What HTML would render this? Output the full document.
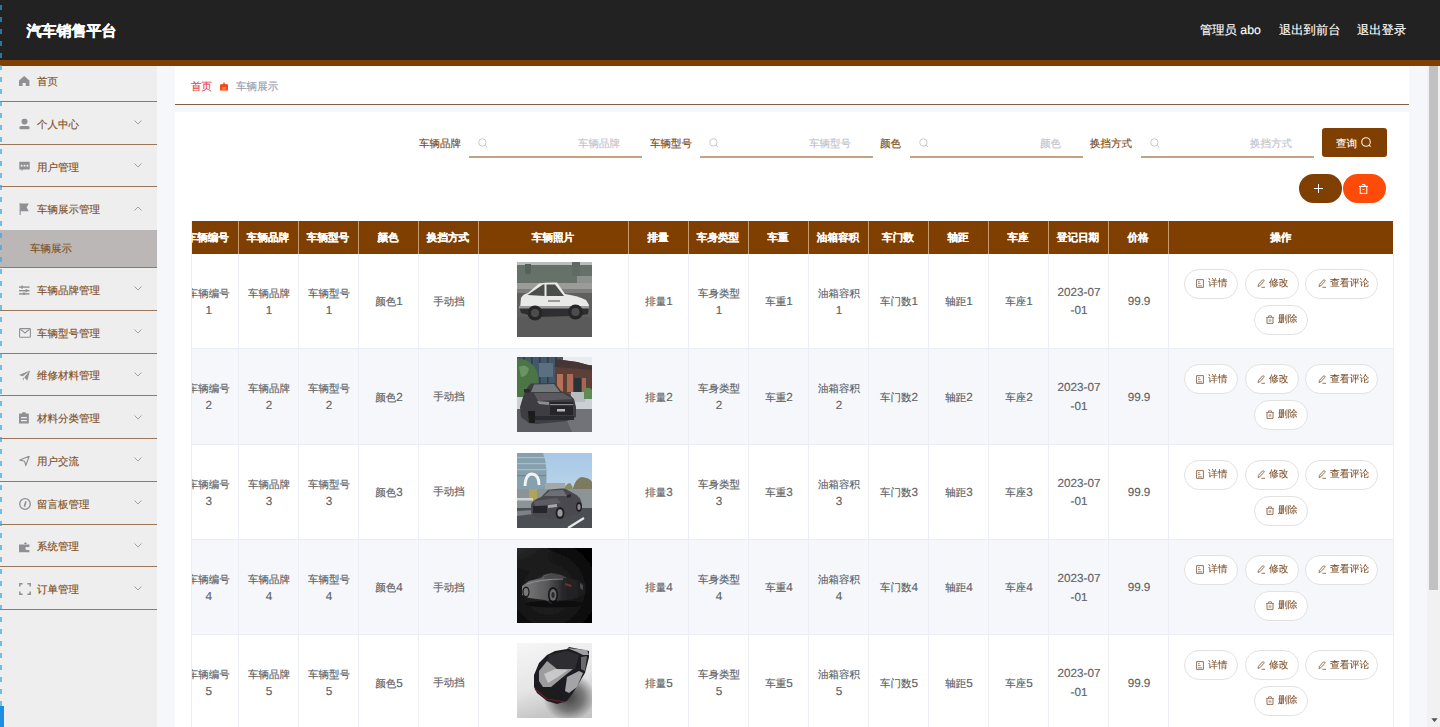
<!DOCTYPE html>
<html><head><meta charset="utf-8">
<style>
*{box-sizing:border-box;margin:0;padding:0}
html,body{width:1440px;height:727px;overflow:hidden;background:#f5f7fa;font-family:"Liberation Sans",sans-serif;text-rendering:geometricPrecision;-webkit-text-stroke-width:0.15px}
#hdr{position:absolute;left:0;top:0;width:1440px;height:60px;background:#222222}
#title{position:absolute;left:26.5px;top:22px;font-size:15px;font-weight:bold;-webkit-text-stroke:0.3px #fff;color:#fff;line-height:20px;white-space:nowrap}
.hn{position:absolute;top:21px;font-size:12.3px;color:#fff;line-height:18px;white-space:nowrap}
#bar{position:absolute;left:0;top:60px;width:1440px;height:6px;background:#7f3f00}
#side{position:absolute;left:0;top:66px;width:157px;height:661px;background:#eeeeee}
.si{position:absolute;left:0;width:157px;top:0}
.si .ic{position:absolute;left:19px;top:50%;transform:translateY(-50%);display:flex;line-height:0}
.si .st{position:absolute;left:37px;top:50%;margin-top:-6px;font-size:10.5px;line-height:17px;color:#7e5028;white-space:nowrap}
.si .chv{position:absolute;left:134px;top:50%;margin-top:-2.6px;line-height:0}
.sub{position:absolute;left:0;width:157px;background:#bcb7b7}
.sbl{position:absolute;left:0;width:157px;height:1px;background:#9a7758}
.subt{position:absolute;left:30px;top:11.5px;font-size:10.5px;line-height:17px;color:#7e5028}
#crumb{position:absolute;left:175px;top:66px;width:1234px;height:39px;background:#fff;border-bottom:1px solid #7d6048}
#crumb .c1{position:absolute;left:16px;top:13px;font-size:10.6px;line-height:17px;color:#e8454f}
#crumb .c2{position:absolute;left:61px;top:13px;font-size:10.6px;line-height:17px;color:#97a0b0}
#crumb svg{position:absolute;left:44.8px;top:15.5px}
#main{position:absolute;left:175px;top:112px;width:1234px;height:615px;background:#fff}
.lbl{position:absolute;top:136px;font-size:10.5px;line-height:17px;color:#7a4a20;white-space:nowrap}
.inp{position:absolute;top:127px;height:31px;border-bottom:2px solid #c5a282}
.inp .sic{position:absolute;left:9px;top:11px}
.inp .ph{position:absolute;right:22px;top:9px;font-size:10.5px;line-height:17px;color:#c0c4cc;white-space:nowrap}
#qbtn{position:absolute;left:1322px;top:127.6px;width:64.8px;height:29.6px;background:#7f3f00;border-radius:3px;color:#fff;font-size:10.5px;line-height:17px}
#qbtn span{position:absolute;left:14px;top:8.4px}
#qbtn svg{position:absolute;left:39px;top:9.4px}
.pill{position:absolute;top:174px;width:43px;height:29px;border-radius:15px}
#tw{position:absolute;left:191px;top:221px;width:1203px;height:506px;overflow:hidden;border-left:1px solid #ebeef5}
table{position:absolute;left:-14px;top:0;border-collapse:collapse;table-layout:fixed;width:1215px}
th{height:32.5px;padding-top:3px !important;-webkit-text-stroke:0.15px #fff;background:#7f3f00;color:#fff;font-size:10.6px;font-weight:bold;text-align:center;border-left:1px solid #c89a70;padding:0;white-space:nowrap;overflow:hidden}
th:first-child{border-left:none}
td .n{font-size:11.7px}
td .c{position:relative;top:1.5px}
td{height:95.3px;padding-top:3px !important;padding-left:2px !important;border-left:1px solid #ebeef5;border-bottom:1px solid #ebeef5;text-align:center;font-size:10.5px;line-height:17.5px;color:#606266;padding:0;overflow:hidden}
td:first-child{border-left:none}
td .img{width:75px;height:75px;margin:0 auto;line-height:0;position:relative;top:-1.5px;left:1.5px}
td.ops{position:relative;border-right:1px solid #ebeef5}
td.imc{padding-top:0 !important;padding-left:0 !important}
td.ops{padding-left:0 !important}
.opw{position:absolute;left:0;top:0;width:225px;height:95px}
.ob{position:absolute;height:30px;border:1px solid #e2e2e2;border-radius:15px;background:#fff;color:#7a4c26}
.ob svg{position:absolute;left:11.7px;top:9.2px}
.ob b{position:absolute;left:23.3px;top:8.2px;font-weight:normal;font-size:19.6px;line-height:20px;transform:scale(0.5);transform-origin:0 0;white-space:nowrap}
#sb{position:absolute;left:1427px;top:66px;width:13px;height:661px;background:#f1f1f1}
#thumb{position:absolute;left:1429px;top:66px;width:9px;height:524px;background:#c1c1c1}
#dash{position:absolute;left:0;top:0;width:2px;height:706px;background:repeating-linear-gradient(to bottom, transparent 0, transparent 5.2px, rgba(40,165,240,0.65) 5.2px, rgba(40,165,240,0.65) 9.7px, transparent 9.7px, transparent 12px)}
#bluebar{position:absolute;left:0;top:706px;width:4px;height:21px;background:#1e8fe0}
</style></head><body>
<div id="hdr">
  <div id="title">汽车销售平台</div>
  <div class="hn" style="left:1200px">管理员 abo</div>
  <div class="hn" style="left:1279px">退出到前台</div>
  <div class="hn" style="left:1357px">退出登录</div>
</div>
<div id="bar"></div>
<div id="side">
<div style="position:absolute;left:0;top:-66px;width:157px;height:727px">
<div class="sub" style="top:229.65px;height:37.95px;"><span class="subt">车辆展示</span></div>
<div class="si" style="top:66px;height:35.4px;"><span class="ic" style="margin-top:-2.5px"><svg width="11" height="10" viewBox="0 0 11 10"><path d="M5.2 0 L10.4 4.4 V10 H6.8 V7 H3.6 V10 H0 V4.4 Z" fill="#8f8f94"/></svg></span><span class="st" style="margin-top:-10.2px">首页</span></div>
<div class="si" style="top:101.4px;height:42.75px;"><span class="ic" style="margin-top:1.2px"><svg width="11" height="11" viewBox="0 0 11 11"><circle cx="5.5" cy="3" r="3" fill="#8f8f94"/><rect x="0.3" y="7.4" width="10.4" height="3.6" rx="1.8" fill="#8f8f94"/></svg></span><span class="st">个人中心</span><span class="chv"><svg width="8" height="5" viewBox="0 0 8 5"><path d="M0.5 0.5 L4 4 L7.5 0.5" fill="none" stroke="#999" stroke-width="0.9"/></svg></span></div>
<div class="si" style="top:144.15px;height:42.75px;"><span class="ic" style="margin-top:1.2px"><svg width="11" height="11" viewBox="0 0 11 11"><path d="M0.3 0 H10.7 V8 H4 L2.6 9.8 V8 H0.3 Z" fill="#8f8f94"/><rect x="1.7" y="3.3" width="1.8" height="1.8" fill="#eee"/><rect x="4.6" y="3.3" width="1.8" height="1.8" fill="#eee"/><rect x="7.5" y="3.3" width="1.8" height="1.8" fill="#eee"/></svg></span><span class="st">用户管理</span><span class="chv"><svg width="8" height="5" viewBox="0 0 8 5"><path d="M0.5 0.5 L4 4 L7.5 0.5" fill="none" stroke="#999" stroke-width="0.9"/></svg></span></div>
<div class="si" style="top:186.9px;height:42.75px;"><span class="ic" style="margin-top:0.3px"><svg width="11" height="12" viewBox="0 0 11 12"><rect x="0.6" y="0" width="1.1" height="12" fill="#8f8f94"/><path d="M1.2 0.6 H9.8 L7.6 4.4 L9.8 8.2 H1.2 Z" fill="#8f8f94"/></svg></span><span class="st">车辆展示管理</span><span class="chv"><svg width="8" height="5" viewBox="0 0 8 5"><path d="M0.5 4.5 L4 1 L7.5 4.5" fill="none" stroke="#999" stroke-width="0.9"/></svg></span></div>
<div class="si" style="top:267.6px;height:42.75px;"><span class="ic" style="margin-top:1.2px"><svg width="11" height="10" viewBox="0 0 11 10"><rect x="0" y="1.4" width="10.5" height="1.4" fill="#8f8f94"/><rect x="0" y="5.0" width="10.5" height="1.4" fill="#8f8f94"/><rect x="0" y="8.2" width="10.5" height="1.4" fill="#8f8f94"/><rect x="2.2" y="0.6" width="1.6" height="3" fill="#8f8f94"/><rect x="6.6" y="4.2" width="1.6" height="3" fill="#8f8f94"/><rect x="4.2" y="7.4" width="1.6" height="3" fill="#8f8f94"/></svg></span><span class="st">车辆品牌管理</span><span class="chv"><svg width="8" height="5" viewBox="0 0 8 5"><path d="M0.5 0.5 L4 4 L7.5 0.5" fill="none" stroke="#999" stroke-width="0.9"/></svg></span></div>
<div class="si" style="top:310.35px;height:42.75px;"><span class="ic" style="margin-top:1.2px"><svg width="12" height="10" viewBox="0 0 12 10"><rect x="0.6" y="0.6" width="10.8" height="8.6" rx="0.8" fill="none" stroke="#8f8f94" stroke-width="1.1"/><path d="M1.5 1.3 L6 5 L10.5 1.3" fill="none" stroke="#8f8f94" stroke-width="1.1"/></svg></span><span class="st">车辆型号管理</span><span class="chv"><svg width="8" height="5" viewBox="0 0 8 5"><path d="M0.5 0.5 L4 4 L7.5 0.5" fill="none" stroke="#999" stroke-width="0.9"/></svg></span></div>
<div class="si" style="top:353.1px;height:42.75px;"><span class="ic" style="margin-top:1.2px"><svg width="11" height="11" viewBox="0 0 11 11"><path d="M0 4.6 L11 0 L8.4 10 L5.2 7 L10.4 0.6 L3.8 5.8 Z" fill="#8f8f94"/><path d="M3.8 7.2 L5 7.6 L4 10.8 Z" fill="#8f8f94"/></svg></span><span class="st">维修材料管理</span><span class="chv"><svg width="8" height="5" viewBox="0 0 8 5"><path d="M0.5 0.5 L4 4 L7.5 0.5" fill="none" stroke="#999" stroke-width="0.9"/></svg></span></div>
<div class="si" style="top:395.85px;height:42.75px;"><span class="ic" style="margin-top:1.2px"><svg width="10" height="12" viewBox="0 0 10 12"><rect x="0" y="1.6" width="9.8" height="10" rx="0.6" fill="#8f8f94"/><rect x="3" y="0.2" width="3.8" height="2" rx="0.8" fill="#8f8f94"/><rect x="2" y="5" width="5.8" height="1.3" fill="#eee"/><rect x="2" y="8" width="5.8" height="1.3" fill="#eee"/></svg></span><span class="st">材料分类管理</span><span class="chv"><svg width="8" height="5" viewBox="0 0 8 5"><path d="M0.5 0.5 L4 4 L7.5 0.5" fill="none" stroke="#999" stroke-width="0.9"/></svg></span></div>
<div class="si" style="top:438.6px;height:42.75px;"><span class="ic" style="margin-top:1.2px"><svg width="11" height="11" viewBox="0 0 11 11"><path d="M0.8 4.6 L10.2 0.8 L6.8 10 L5.6 5.8 Z" fill="none" stroke="#8f8f94" stroke-width="1.1" stroke-linejoin="round"/></svg></span><span class="st">用户交流</span><span class="chv"><svg width="8" height="5" viewBox="0 0 8 5"><path d="M0.5 0.5 L4 4 L7.5 0.5" fill="none" stroke="#999" stroke-width="0.9"/></svg></span></div>
<div class="si" style="top:481.35px;height:42.75px;"><span class="ic" style="margin-top:1.2px"><svg width="12" height="12" viewBox="0 0 12 12"><circle cx="6" cy="6" r="5.3" fill="none" stroke="#8f8f94" stroke-width="1.3"/><path d="M6.9 3.4 L5.4 8.8" stroke="#8f8f94" stroke-width="1.6"/></svg></span><span class="st">留言板管理</span><span class="chv"><svg width="8" height="5" viewBox="0 0 8 5"><path d="M0.5 0.5 L4 4 L7.5 0.5" fill="none" stroke="#999" stroke-width="0.9"/></svg></span></div>
<div class="si" style="top:524.1px;height:42.75px;"><span class="ic" style="margin-top:1.2px"><svg width="11" height="11" viewBox="0 0 11 11"><path d="M0 3 H10.4 V5.6 H7.8 A1.4 1.4 0 0 0 7.8 8.4 H10.4 V11 H0 Z" fill="#8f8f94"/><path d="M4.6 2.6 L6.6 0.6 L8 2.6 Z" fill="#8f8f94"/></svg></span><span class="st">系统管理</span><span class="chv"><svg width="8" height="5" viewBox="0 0 8 5"><path d="M0.5 0.5 L4 4 L7.5 0.5" fill="none" stroke="#999" stroke-width="0.9"/></svg></span></div>
<div class="si" style="top:566.85px;height:42.75px;"><span class="ic" style="margin-top:1.2px"><svg width="12" height="12" viewBox="0 0 12 12"><path d="M0.8 3.6 V0.8 H3.6 M8.4 0.8 H11.2 V3.6 M11.2 8.4 V11.2 H8.4 M3.6 11.2 H0.8 V8.4" fill="none" stroke="#8f8f94" stroke-width="1.5"/></svg></span><span class="st">订单管理</span><span class="chv"><svg width="8" height="5" viewBox="0 0 8 5"><path d="M0.5 0.5 L4 4 L7.5 0.5" fill="none" stroke="#999" stroke-width="0.9"/></svg></span></div>
<div class="sbl" style="top:101px"></div>
<div class="sbl" style="top:144px"></div>
<div class="sbl" style="top:186px"></div>
<div class="sbl" style="top:267px"></div>
<div class="sbl" style="top:310px"></div>
<div class="sbl" style="top:353px"></div>
<div class="sbl" style="top:395px"></div>
<div class="sbl" style="top:438px"></div>
<div class="sbl" style="top:481px"></div>
<div class="sbl" style="top:524px"></div>
<div class="sbl" style="top:566px"></div>
<div class="sbl" style="top:609px"></div>
</div>
</div>
<div id="crumb">
  <span class="c1">首页</span>
  <svg width="8" height="9" viewBox="0 0 8 9"><path d="M4 0 L5 2 L8 2.6 V8.5 H0 V2.6 L3 2 Z" fill="#f24c12"/><path d="M2.2 5 H5.8 V8.5 H2.2 Z" fill="#f77a50"/></svg>
  <span class="c2">车辆展示</span>
</div>
<div id="main"></div>
<span class="lbl" style="left:419px">车辆品牌</span><div class="inp" style="left:469px;width:173px"><svg class="sic" width="10" height="10" viewBox="0 0 10 10"><circle cx="4.4" cy="4.4" r="3.7" fill="none" stroke="#c0c4cc" stroke-width="0.9"/><path d="M7.1 7.1 L9.2 9.2" stroke="#c0c4cc" stroke-width="0.9"/></svg><span class="ph">车辆品牌</span></div><span class="lbl" style="left:650px">车辆型号</span><div class="inp" style="left:700px;width:173px"><svg class="sic" width="10" height="10" viewBox="0 0 10 10"><circle cx="4.4" cy="4.4" r="3.7" fill="none" stroke="#c0c4cc" stroke-width="0.9"/><path d="M7.1 7.1 L9.2 9.2" stroke="#c0c4cc" stroke-width="0.9"/></svg><span class="ph">车辆型号</span></div><span class="lbl" style="left:880px">颜色</span><div class="inp" style="left:910px;width:173px"><svg class="sic" width="10" height="10" viewBox="0 0 10 10"><circle cx="4.4" cy="4.4" r="3.7" fill="none" stroke="#c0c4cc" stroke-width="0.9"/><path d="M7.1 7.1 L9.2 9.2" stroke="#c0c4cc" stroke-width="0.9"/></svg><span class="ph">颜色</span></div><span class="lbl" style="left:1090px">换挡方式</span><div class="inp" style="left:1141px;width:173px"><svg class="sic" width="10" height="10" viewBox="0 0 10 10"><circle cx="4.4" cy="4.4" r="3.7" fill="none" stroke="#c0c4cc" stroke-width="0.9"/><path d="M7.1 7.1 L9.2 9.2" stroke="#c0c4cc" stroke-width="0.9"/></svg><span class="ph">换挡方式</span></div>
<div id="qbtn"><span>查询</span><svg width="11" height="11" viewBox="0 0 11 11"><circle cx="5" cy="5" r="4.3" fill="none" stroke="#fbeee0" stroke-width="1.1"/><path d="M8 8 L9.6 9.6" stroke="#fbeee0" stroke-width="1.1"/></svg></div>
<div class="pill" style="left:1299px;background:#7f3f00"><svg style="position:absolute;left:15px;top:10px" width="9" height="9" viewBox="0 0 9 9"><path d="M4.5 0 V9 M0 4.5 H9" stroke="#fff" stroke-width="1"/></svg></div>
<div class="pill" style="left:1343px;background:#ff4b0a"><svg style="position:absolute;left:16px;top:10px" width="9" height="10" viewBox="0 0 9 10"><rect x="1.2" y="2.4" width="6.6" height="7" fill="none" stroke="#fff" stroke-width="1"/><path d="M0 2.4 H9 M3.2 0.6 H5.8 V2.4" fill="none" stroke="#fff" stroke-width="1"/><path d="M3.5 5.5 H5.5" stroke="#fff" stroke-width="1"/></svg></div>
<div id="tw"><table><thead><tr><th style="width:60px">车辆编号</th><th style="width:60px">车辆品牌</th><th style="width:60px">车辆型号</th><th style="width:60px">颜色</th><th style="width:60px">换挡方式</th><th style="width:150px">车辆照片</th><th style="width:60px">排量</th><th style="width:60px">车身类型</th><th style="width:60px">车重</th><th style="width:60px">油箱容积</th><th style="width:60px">车门数</th><th style="width:60px">轴距</th><th style="width:60px">车座</th><th style="width:60px">登记日期</th><th style="width:60px">价格</th><th style="width:225px">操作</th></tr></thead><tbody><tr style="background:#ffffff"><td><span class="c">车辆编号</span><br><span class="n">1</span></td><td><span class="c">车辆品牌</span><br><span class="n">1</span></td><td><span class="c">车辆型号</span><br><span class="n">1</span></td><td>颜色<span class="n">1</span></td><td>手动挡</td><td class="imc"><div class="img"><svg width="75" height="75" viewBox="0 0 75 75"><defs><filter id="bl1" x="-5%" y="-5%" width="110%" height="110%"><feGaussianBlur stdDeviation="0.55"/></filter><clipPath id="cp1"><rect width="75" height="75"/></clipPath></defs><g clip-path="url(#cp1)"><g filter="url(#bl1)">
<rect width="75" height="75" fill="#5e5f5e"/>
<rect width="75" height="4" fill="#b9bdbb"/>
<rect y="3" width="75" height="18" fill="#66716b"/>
<rect x="8" y="2" width="6" height="10" fill="#56625c"/><rect x="55" y="0" width="8" height="14" fill="#5f6a64"/>
<rect x="60" y="14" width="15" height="8" fill="#8c918e"/>
<rect y="21" width="75" height="6" fill="#9a9c9a"/>
<rect y="27" width="75" height="4" fill="#7b7d7b"/>
<rect y="55" width="75" height="20" fill="#5a5a5a"/>
<path d="M4 36 Q6 32 11 31 L22 21.5 Q30 20 40 20.5 L48 32 Q62 34 69 38 L72 43 L71 47 L3 46 Z" fill="#e9e9e7"/>
<path d="M2 44 L72 44 L71 52 L60 54 L20 55 L4 51 Z" fill="#2f2f30"/>
<rect x="2" y="44" width="70" height="2.5" fill="#9a9a9a"/>
<path d="M10.5 33 L26 22.5 L27.5 22.5 L27.5 34 Z" fill="#4b4e4d"/>
<path d="M29.5 22.5 L38 22.5 L47 34 L29.5 34 Z" fill="#4b4e4d"/>
<circle cx="18" cy="51" r="7.5" fill="#262626"/><circle cx="18" cy="51" r="4" fill="#4e4e4e"/>
<circle cx="58.5" cy="50" r="7.5" fill="#262626"/><circle cx="58.5" cy="50" r="4" fill="#4e4e4e"/>
<rect x="31" y="38" width="12" height="2" fill="#9a9a9a"/>
</g></g></svg></div></td><td>排量<span class="n">1</span></td><td><span class="c">车身类型</span><br><span class="n">1</span></td><td>车重<span class="n">1</span></td><td><span class="c">油箱容积</span><br><span class="n">1</span></td><td>车门数<span class="n">1</span></td><td>轴距<span class="n">1</span></td><td>车座<span class="n">1</span></td><td><span class="n">2023-07</span><br><span class="n">-01</span></td><td><span class="n">99.9</span></td><td class="ops"><div class="opw"><span class="ob" style="left:15.3px;top:15.2px;width:54px"><svg width="8" height="9" viewBox="0 0 8 9"><path d="M0.6 0.6 H7.4 V8.4 H0.6 Z" fill="none" stroke="#8a6446" stroke-width="0.9"/><path d="M2 2.6 H3.6 M2 4.4 H4.6 M2 6.8 H6" stroke="#8a6446" stroke-width="0.8"/></svg><b>详情</b></span><span class="ob" style="left:76.1px;top:15.2px;width:54px"><svg width="9" height="9" viewBox="0 0 9 9"><path d="M1.2 7.6 L1.4 5.4 L5.4 1 Q6.2 0.4 6.8 1 Q7.4 1.6 6.8 2.4 L2.8 6.8 Z" fill="none" stroke="#8a6446" stroke-width="0.9"/><path d="M4.4 8.3 H8" stroke="#8a6446" stroke-width="0.9"/></svg><b>修改</b></span><span class="ob" style="left:136.9px;top:15.2px;width:72.4px"><svg width="9" height="9" viewBox="0 0 9 9"><path d="M1.2 7.6 L1.4 5.4 L5.4 1 Q6.2 0.4 6.8 1 Q7.4 1.6 6.8 2.4 L2.8 6.8 Z" fill="none" stroke="#8a6446" stroke-width="0.9"/><path d="M4.4 8.3 H8" stroke="#8a6446" stroke-width="0.9"/></svg><b>查看评论</b></span><span class="ob" style="left:85.1px;top:51px;width:54.5px"><svg width="8" height="9" viewBox="0 0 8 9"><path d="M1 2.4 V8.4 H7 V2.4" fill="none" stroke="#8a6446" stroke-width="0.9"/><path d="M0.2 2.4 H7.8 M2.6 2.2 V0.8 H5.4 V2.2" fill="none" stroke="#8a6446" stroke-width="0.8"/><path d="M3.2 4.2 V6.8 M4.8 4.2 V6.8" stroke="#8a6446" stroke-width="0.7"/></svg><b>删除</b></span></div></td></tr>
<tr style="background:#f5f7fa"><td><span class="c">车辆编号</span><br><span class="n">2</span></td><td><span class="c">车辆品牌</span><br><span class="n">2</span></td><td><span class="c">车辆型号</span><br><span class="n">2</span></td><td>颜色<span class="n">2</span></td><td>手动挡</td><td class="imc"><div class="img"><svg width="75" height="75" viewBox="0 0 75 75"><defs><filter id="bl2" x="-5%" y="-5%" width="110%" height="110%"><feGaussianBlur stdDeviation="0.55"/></filter><clipPath id="cp2"><rect width="75" height="75"/></clipPath></defs><g clip-path="url(#cp2)"><g filter="url(#bl2)">
<rect width="75" height="75" fill="#606166"/>
<rect x="0" y="0" width="46" height="40" fill="#43586a"/>
<rect x="6" y="0" width="1.6" height="36" fill="#2e3e4a"/><rect x="14" y="0" width="1.6" height="36" fill="#2e3e4a"/><rect x="22" y="0" width="1.6" height="36" fill="#2e3e4a"/><rect x="30" y="0" width="1.6" height="36" fill="#2e3e4a"/><rect x="38" y="0" width="1.6" height="36" fill="#2e3e4a"/>
<rect x="22" y="6" width="14" height="14" fill="#5a7080"/>
<rect x="46" y="0" width="29" height="8" fill="#e8ecee"/>
<path d="M38 2 L60 5 L75 9 L75 36 L38 36 Z" fill="#5c4038"/>
<path d="M38 2 L60 5 L75 9 L75 13 L38 10 Z" fill="#463634"/>
<rect x="40" y="17" width="6" height="18" fill="#b67258"/><rect x="50" y="17" width="6" height="18" fill="#ae6a52"/><rect x="65" y="21" width="4" height="14" fill="#a66650"/>
<rect x="57" y="21" width="7" height="14" fill="#2a3038"/>
<path d="M0 2 Q10 1 17 9 Q23 18 21 30 L18 40 L0 40 Z" fill="#4b7545"/>
<path d="M2 10 Q8 6 12 12 Q10 20 4 20 Z" fill="#6b9462"/>
<rect x="0" y="40" width="75" height="12" fill="#cdd0d3"/>
<rect x="54" y="35" width="14" height="10" fill="#b9bdc2"/>
<path d="M67 31 Q75 30 75 34 L75 42 L67 42 Z" fill="#5e8c54"/>
<rect x="0" y="52" width="75" height="23" fill="#5c5d62"/>
<path d="M45 52 L75 52 L75 75 L55 75 Z" fill="#727378"/>
<path d="M3 50 L6 40 L10 31 L14 26.5 L38 26 L44 34 L52 37 L57 42 L59 50 L59 60 L50 64 L20 67 L12 66 L4 60 Z" fill="#3d3c42"/>
<path d="M14 35 L17 27.5 L37 27 L43 35 Z" fill="#75787d"/>
<path d="M17 36 L46 36 L56 42 L21 44 Z" fill="#5b5a60"/>
<path d="M20 44 L32 45 L32 48 L22 47 Z" fill="#8c8c92"/>
<rect x="33" y="45" width="23" height="13" fill="#26252a"/>
<rect x="33" y="47" width="23" height="1.2" fill="#8a8a8e"/>
<rect x="40" y="52" width="8" height="2.5" fill="#b8b8bc"/>
<rect x="7" y="32" width="6" height="3.5" fill="#2a2a2e"/>
<path d="M11 54 L18 54 L18 66 L12 66 Z" fill="#1c1c1e"/>
<rect x="18" y="59" width="39" height="4" fill="#2c2b30"/>
</g></g></svg></div></td><td>排量<span class="n">2</span></td><td><span class="c">车身类型</span><br><span class="n">2</span></td><td>车重<span class="n">2</span></td><td><span class="c">油箱容积</span><br><span class="n">2</span></td><td>车门数<span class="n">2</span></td><td>轴距<span class="n">2</span></td><td>车座<span class="n">2</span></td><td><span class="n">2023-07</span><br><span class="n">-01</span></td><td><span class="n">99.9</span></td><td class="ops"><div class="opw"><span class="ob" style="left:15.3px;top:15.2px;width:54px"><svg width="8" height="9" viewBox="0 0 8 9"><path d="M0.6 0.6 H7.4 V8.4 H0.6 Z" fill="none" stroke="#8a6446" stroke-width="0.9"/><path d="M2 2.6 H3.6 M2 4.4 H4.6 M2 6.8 H6" stroke="#8a6446" stroke-width="0.8"/></svg><b>详情</b></span><span class="ob" style="left:76.1px;top:15.2px;width:54px"><svg width="9" height="9" viewBox="0 0 9 9"><path d="M1.2 7.6 L1.4 5.4 L5.4 1 Q6.2 0.4 6.8 1 Q7.4 1.6 6.8 2.4 L2.8 6.8 Z" fill="none" stroke="#8a6446" stroke-width="0.9"/><path d="M4.4 8.3 H8" stroke="#8a6446" stroke-width="0.9"/></svg><b>修改</b></span><span class="ob" style="left:136.9px;top:15.2px;width:72.4px"><svg width="9" height="9" viewBox="0 0 9 9"><path d="M1.2 7.6 L1.4 5.4 L5.4 1 Q6.2 0.4 6.8 1 Q7.4 1.6 6.8 2.4 L2.8 6.8 Z" fill="none" stroke="#8a6446" stroke-width="0.9"/><path d="M4.4 8.3 H8" stroke="#8a6446" stroke-width="0.9"/></svg><b>查看评论</b></span><span class="ob" style="left:85.1px;top:51px;width:54.5px"><svg width="8" height="9" viewBox="0 0 8 9"><path d="M1 2.4 V8.4 H7 V2.4" fill="none" stroke="#8a6446" stroke-width="0.9"/><path d="M0.2 2.4 H7.8 M2.6 2.2 V0.8 H5.4 V2.2" fill="none" stroke="#8a6446" stroke-width="0.8"/><path d="M3.2 4.2 V6.8 M4.8 4.2 V6.8" stroke="#8a6446" stroke-width="0.7"/></svg><b>删除</b></span></div></td></tr>
<tr style="background:#ffffff"><td><span class="c">车辆编号</span><br><span class="n">3</span></td><td><span class="c">车辆品牌</span><br><span class="n">3</span></td><td><span class="c">车辆型号</span><br><span class="n">3</span></td><td>颜色<span class="n">3</span></td><td>手动挡</td><td class="imc"><div class="img"><svg width="75" height="75" viewBox="0 0 75 75"><defs><filter id="bl3" x="-5%" y="-5%" width="110%" height="110%"><feGaussianBlur stdDeviation="0.55"/></filter><clipPath id="cp3"><rect width="75" height="75"/></clipPath></defs><g clip-path="url(#cp3)"><g filter="url(#bl3)">
<defs><linearGradient id="sky3" x1="0" y1="0" x2="0" y2="1"><stop offset="0" stop-color="#a6c8e6"/><stop offset="1" stop-color="#cfe0ec"/></linearGradient></defs>
<rect width="75" height="75" fill="url(#sky3)"/>
<path d="M0 0 L26 0 Q31 12 29 36 L0 38 Z" fill="#86a0ae"/>
<rect x="0" y="4" width="28" height="1.2" fill="#a9bec8"/><rect x="0" y="10" width="29" height="1.2" fill="#a9bec8"/><rect x="0" y="16" width="29" height="1.2" fill="#a9bec8"/><rect x="0" y="22" width="29" height="1.2" fill="#6e8896"/>
<path d="M8 33 Q8.5 21 15 21 Q22 21.5 22 32" fill="none" stroke="#f0f4f6" stroke-width="2.8"/>
<path d="M54 44 Q57 25 65 24 Q73 25 75 29 L75 46 Z" fill="#7d7a5e"/>
<path d="M46 40 Q48 30 53 30 Q56 32 56 40 Z" fill="#8a8866"/>
<rect x="28" y="30" width="20" height="12" fill="#a2a8a8"/>
<rect x="0" y="36" width="75" height="19" fill="#8c9497"/>
<rect x="12" y="36" width="8" height="12" fill="#b0a45a"/>
<rect x="0" y="45" width="16" height="2.5" fill="#cfd4d6"/>
<rect x="0" y="55" width="75" height="20" fill="#4c4f53"/>
<path d="M0 58 L16 57 L16 61 L0 63 Z" fill="#7e8286"/>
<path d="M14 52 Q15 47 24 44 L31 37 Q40 35 48 35.5 L56 40 Q64 43 65 52 L63 60 L48 64 L40 67 L18 64 L14 60 Z" fill="#4a4a50"/>
<path d="M27 43 L33 37.5 L46 37 L50 43 Z" fill="#6c7076"/>
<path d="M17 48 L40 45 L44 50 L18 53 Z" fill="#5c5c62"/>
<rect x="16" y="53" width="14" height="7" fill="#262629"/>
<path d="M31 52 L40 51 L40 54 L31 55 Z" fill="#a8a8ac"/>
<ellipse cx="43" cy="60" rx="4.5" ry="6" fill="#1e1e20"/><ellipse cx="43" cy="60" rx="2.6" ry="3.8" fill="#9a9a9e"/>
<ellipse cx="62" cy="54" rx="3" ry="5" fill="#1e1e20"/><ellipse cx="62" cy="54" rx="1.6" ry="3" fill="#8a8a8e"/>
<path d="M50 42 L54 41 L54 44 L50 45 Z" fill="#2a2a2e"/>
<path d="M51 75 L67 65" stroke="#e8e8e8" stroke-width="2.2"/>
</g></g></svg></div></td><td>排量<span class="n">3</span></td><td><span class="c">车身类型</span><br><span class="n">3</span></td><td>车重<span class="n">3</span></td><td><span class="c">油箱容积</span><br><span class="n">3</span></td><td>车门数<span class="n">3</span></td><td>轴距<span class="n">3</span></td><td>车座<span class="n">3</span></td><td><span class="n">2023-07</span><br><span class="n">-01</span></td><td><span class="n">99.9</span></td><td class="ops"><div class="opw"><span class="ob" style="left:15.3px;top:15.2px;width:54px"><svg width="8" height="9" viewBox="0 0 8 9"><path d="M0.6 0.6 H7.4 V8.4 H0.6 Z" fill="none" stroke="#8a6446" stroke-width="0.9"/><path d="M2 2.6 H3.6 M2 4.4 H4.6 M2 6.8 H6" stroke="#8a6446" stroke-width="0.8"/></svg><b>详情</b></span><span class="ob" style="left:76.1px;top:15.2px;width:54px"><svg width="9" height="9" viewBox="0 0 9 9"><path d="M1.2 7.6 L1.4 5.4 L5.4 1 Q6.2 0.4 6.8 1 Q7.4 1.6 6.8 2.4 L2.8 6.8 Z" fill="none" stroke="#8a6446" stroke-width="0.9"/><path d="M4.4 8.3 H8" stroke="#8a6446" stroke-width="0.9"/></svg><b>修改</b></span><span class="ob" style="left:136.9px;top:15.2px;width:72.4px"><svg width="9" height="9" viewBox="0 0 9 9"><path d="M1.2 7.6 L1.4 5.4 L5.4 1 Q6.2 0.4 6.8 1 Q7.4 1.6 6.8 2.4 L2.8 6.8 Z" fill="none" stroke="#8a6446" stroke-width="0.9"/><path d="M4.4 8.3 H8" stroke="#8a6446" stroke-width="0.9"/></svg><b>查看评论</b></span><span class="ob" style="left:85.1px;top:51px;width:54.5px"><svg width="8" height="9" viewBox="0 0 8 9"><path d="M1 2.4 V8.4 H7 V2.4" fill="none" stroke="#8a6446" stroke-width="0.9"/><path d="M0.2 2.4 H7.8 M2.6 2.2 V0.8 H5.4 V2.2" fill="none" stroke="#8a6446" stroke-width="0.8"/><path d="M3.2 4.2 V6.8 M4.8 4.2 V6.8" stroke="#8a6446" stroke-width="0.7"/></svg><b>删除</b></span></div></td></tr>
<tr style="background:#f5f7fa"><td><span class="c">车辆编号</span><br><span class="n">4</span></td><td><span class="c">车辆品牌</span><br><span class="n">4</span></td><td><span class="c">车辆型号</span><br><span class="n">4</span></td><td>颜色<span class="n">4</span></td><td>手动挡</td><td class="imc"><div class="img"><svg width="75" height="75" viewBox="0 0 75 75"><defs><filter id="bl4" x="-5%" y="-5%" width="110%" height="110%"><feGaussianBlur stdDeviation="0.55"/></filter><clipPath id="cp4"><rect width="75" height="75"/></clipPath></defs><g clip-path="url(#cp4)"><g filter="url(#bl4)">
<defs><radialGradient id="g4" cx="0.42" cy="0.55" r="0.65"><stop offset="0" stop-color="#2a2a2a"/><stop offset="0.7" stop-color="#141414"/><stop offset="1" stop-color="#060606"/></radialGradient>
<linearGradient id="b4" x1="0" y1="0" x2="1" y2="0"><stop offset="0" stop-color="#7c7c7e"/><stop offset="0.4" stop-color="#58585a"/><stop offset="0.65" stop-color="#262628"/><stop offset="1" stop-color="#1c1c1c"/></linearGradient>
<linearGradient id="l4" x1="0" y1="0" x2="1" y2="1"><stop offset="0" stop-color="#4a4a4a"/><stop offset="0.5" stop-color="#1a1a1a" stop-opacity="0"/></linearGradient></defs>
<rect width="75" height="75" fill="url(#g4)"/>
<path d="M0 0 L30 0 L75 30 L75 40 L0 20 Z" fill="url(#l4)" opacity="0.6"/>
<path d="M5 38 L12 33 L24 30 L27 27 L34 25 L44 26.5 L52 30 L62 33 L68 36 L68 46 L60 50 L42 53 L34 56 L28 52 L12 50 L5 47 Z" fill="url(#b4)"/>
<path d="M26 29 L34 26 L44 27 L50 30 Q38 29 28 31 Z" fill="#4a4a4c"/>
<path d="M10 36 Q24 31 46 31" stroke="#8e8e90" stroke-width="1" fill="none"/>
<ellipse cx="9" cy="44" rx="3.6" ry="5.5" fill="#1a1a1a"/><ellipse cx="9" cy="44" rx="2.4" ry="4" fill="#78787a"/>
<ellipse cx="36" cy="47" rx="5" ry="8" fill="#161616"/><ellipse cx="36" cy="47" rx="3.4" ry="6" fill="#6a6a6c"/><ellipse cx="36" cy="47" rx="1.6" ry="3" fill="#2a2a2a"/>
<path d="M48 35 L55 37 L54 39 L48 37 Z" fill="#7a2a30"/>
<path d="M63 35 L66 37 L66 42 L63 40 Z" fill="#4a4a4c"/>
<ellipse cx="38" cy="56" rx="30" ry="3.5" fill="#000" opacity="0.55"/>
</g></g></svg></div></td><td>排量<span class="n">4</span></td><td><span class="c">车身类型</span><br><span class="n">4</span></td><td>车重<span class="n">4</span></td><td><span class="c">油箱容积</span><br><span class="n">4</span></td><td>车门数<span class="n">4</span></td><td>轴距<span class="n">4</span></td><td>车座<span class="n">4</span></td><td><span class="n">2023-07</span><br><span class="n">-01</span></td><td><span class="n">99.9</span></td><td class="ops"><div class="opw"><span class="ob" style="left:15.3px;top:15.2px;width:54px"><svg width="8" height="9" viewBox="0 0 8 9"><path d="M0.6 0.6 H7.4 V8.4 H0.6 Z" fill="none" stroke="#8a6446" stroke-width="0.9"/><path d="M2 2.6 H3.6 M2 4.4 H4.6 M2 6.8 H6" stroke="#8a6446" stroke-width="0.8"/></svg><b>详情</b></span><span class="ob" style="left:76.1px;top:15.2px;width:54px"><svg width="9" height="9" viewBox="0 0 9 9"><path d="M1.2 7.6 L1.4 5.4 L5.4 1 Q6.2 0.4 6.8 1 Q7.4 1.6 6.8 2.4 L2.8 6.8 Z" fill="none" stroke="#8a6446" stroke-width="0.9"/><path d="M4.4 8.3 H8" stroke="#8a6446" stroke-width="0.9"/></svg><b>修改</b></span><span class="ob" style="left:136.9px;top:15.2px;width:72.4px"><svg width="9" height="9" viewBox="0 0 9 9"><path d="M1.2 7.6 L1.4 5.4 L5.4 1 Q6.2 0.4 6.8 1 Q7.4 1.6 6.8 2.4 L2.8 6.8 Z" fill="none" stroke="#8a6446" stroke-width="0.9"/><path d="M4.4 8.3 H8" stroke="#8a6446" stroke-width="0.9"/></svg><b>查看评论</b></span><span class="ob" style="left:85.1px;top:51px;width:54.5px"><svg width="8" height="9" viewBox="0 0 8 9"><path d="M1 2.4 V8.4 H7 V2.4" fill="none" stroke="#8a6446" stroke-width="0.9"/><path d="M0.2 2.4 H7.8 M2.6 2.2 V0.8 H5.4 V2.2" fill="none" stroke="#8a6446" stroke-width="0.8"/><path d="M3.2 4.2 V6.8 M4.8 4.2 V6.8" stroke="#8a6446" stroke-width="0.7"/></svg><b>删除</b></span></div></td></tr>
<tr style="background:#ffffff"><td><span class="c">车辆编号</span><br><span class="n">5</span></td><td><span class="c">车辆品牌</span><br><span class="n">5</span></td><td><span class="c">车辆型号</span><br><span class="n">5</span></td><td>颜色<span class="n">5</span></td><td>手动挡</td><td class="imc"><div class="img"><svg width="75" height="75" viewBox="0 0 75 75"><defs><filter id="bl5" x="-5%" y="-5%" width="110%" height="110%"><feGaussianBlur stdDeviation="0.55"/></filter><clipPath id="cp5"><rect width="75" height="75"/></clipPath></defs><g clip-path="url(#cp5)"><g filter="url(#bl5)">
<defs><linearGradient id="g5" x1="0" y1="0" x2="0.3" y2="1"><stop offset="0" stop-color="#f6f6f6"/><stop offset="0.6" stop-color="#e6e6e6"/><stop offset="1" stop-color="#c4c4c4"/></linearGradient>
<radialGradient id="sh5" cx="0.5" cy="0.5" r="0.5"><stop offset="0" stop-color="#000" stop-opacity="0.9"/><stop offset="0.55" stop-color="#000" stop-opacity="0.55"/><stop offset="1" stop-color="#000" stop-opacity="0"/></radialGradient></defs>
<rect width="75" height="75" fill="url(#g5)"/>
<ellipse cx="52" cy="54" rx="26" ry="24" fill="url(#sh5)" opacity="0.75"/>
<path d="M17 32 L22 20 L30 12 L38 8 L50 6 L52 4 L72 8 L72 14 L68 30 L62 40 L56 50 L50 58 L40 61 L30 58 L20 50 L17 44 Z" fill="#1f1f21"/>
<path d="M32 12 L50 8 L62 12 L58 26 L40 26 L30 20 Z" fill="#2e2e30"/>
<path d="M22 28 L30 18 L40 26 L56 26 L46 34 L34 44 L26 44 L22 38 Z" fill="#9c9c9e"/>
<path d="M27 31 L38 26 L51 27 L41 34 L31 40 Z" fill="#c8c8ca"/>
<path d="M50 34 L62 28 L66 30 L60 44 L52 50 L48 48 Z" fill="#a4a4a6"/>
<path d="M50 5 L70 7 L72 12 L66 12 L60 9 Z" fill="#a0a0a2"/>
<path d="M64 14 L70 13 L68 28 L64 26 Z" fill="#6a6a6c"/>
<path d="M24 44 L34 44 L46 52 L44 58 L32 57 L22 50 Z" fill="#1a1a1c"/>
<path d="M18 46 L30 56 L48 59" stroke="#701c24" stroke-width="1.2" fill="none"/>
</g></g></svg></div></td><td>排量<span class="n">5</span></td><td><span class="c">车身类型</span><br><span class="n">5</span></td><td>车重<span class="n">5</span></td><td><span class="c">油箱容积</span><br><span class="n">5</span></td><td>车门数<span class="n">5</span></td><td>轴距<span class="n">5</span></td><td>车座<span class="n">5</span></td><td><span class="n">2023-07</span><br><span class="n">-01</span></td><td><span class="n">99.9</span></td><td class="ops"><div class="opw"><span class="ob" style="left:15.3px;top:15.2px;width:54px"><svg width="8" height="9" viewBox="0 0 8 9"><path d="M0.6 0.6 H7.4 V8.4 H0.6 Z" fill="none" stroke="#8a6446" stroke-width="0.9"/><path d="M2 2.6 H3.6 M2 4.4 H4.6 M2 6.8 H6" stroke="#8a6446" stroke-width="0.8"/></svg><b>详情</b></span><span class="ob" style="left:76.1px;top:15.2px;width:54px"><svg width="9" height="9" viewBox="0 0 9 9"><path d="M1.2 7.6 L1.4 5.4 L5.4 1 Q6.2 0.4 6.8 1 Q7.4 1.6 6.8 2.4 L2.8 6.8 Z" fill="none" stroke="#8a6446" stroke-width="0.9"/><path d="M4.4 8.3 H8" stroke="#8a6446" stroke-width="0.9"/></svg><b>修改</b></span><span class="ob" style="left:136.9px;top:15.2px;width:72.4px"><svg width="9" height="9" viewBox="0 0 9 9"><path d="M1.2 7.6 L1.4 5.4 L5.4 1 Q6.2 0.4 6.8 1 Q7.4 1.6 6.8 2.4 L2.8 6.8 Z" fill="none" stroke="#8a6446" stroke-width="0.9"/><path d="M4.4 8.3 H8" stroke="#8a6446" stroke-width="0.9"/></svg><b>查看评论</b></span><span class="ob" style="left:85.1px;top:51px;width:54.5px"><svg width="8" height="9" viewBox="0 0 8 9"><path d="M1 2.4 V8.4 H7 V2.4" fill="none" stroke="#8a6446" stroke-width="0.9"/><path d="M0.2 2.4 H7.8 M2.6 2.2 V0.8 H5.4 V2.2" fill="none" stroke="#8a6446" stroke-width="0.8"/><path d="M3.2 4.2 V6.8 M4.8 4.2 V6.8" stroke="#8a6446" stroke-width="0.7"/></svg><b>删除</b></span></div></td></tr></tbody></table></div>
<div id="sb"></div><div id="thumb"></div>
<svg style="position:absolute;left:1430.5px;top:717.5px" width="7" height="5" viewBox="0 0 7 5"><path d="M0.3 0.3 H6.7 L3.5 4 Z" fill="#505050"/></svg>
<div id="dash"></div><div id="bluebar"></div>
</body></html>
